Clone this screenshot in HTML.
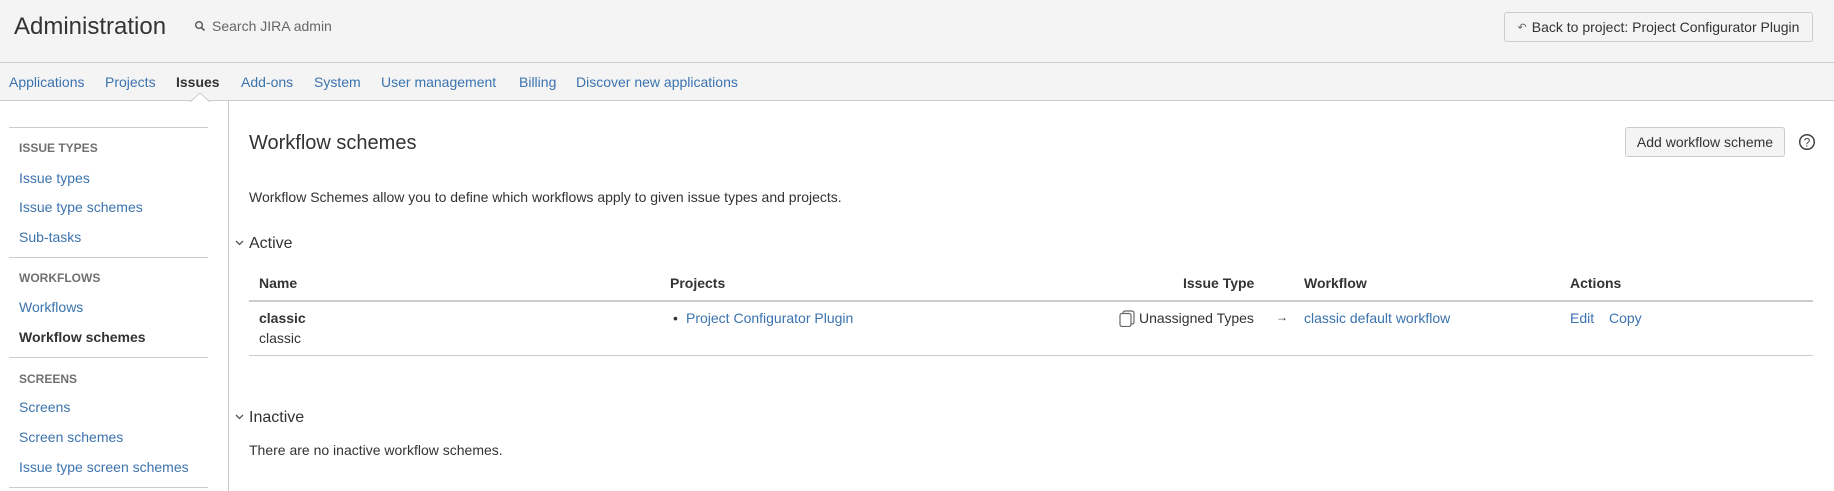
<!DOCTYPE html>
<html><head><meta charset="utf-8"><style>
*{margin:0;padding:0;box-sizing:border-box}
body{width:1834px;height:491px;overflow:hidden;background:#fff;font-family:"Liberation Sans",Arial,sans-serif;font-size:14px;color:#333;position:relative}
.a{position:absolute;white-space:nowrap;line-height:1}
.l{color:#3b73af}
.hdr{position:absolute;left:0;top:0;width:1834px;height:101px;background:#f4f4f4;border-bottom:1px solid #ccc}
.hl{position:absolute;left:0;top:62px;width:1834px;height:1px;background:#ccc}
.btn{position:absolute;border:1px solid #ccc;border-radius:3px;background:#f4f4f4;font-size:14px;color:#333;display:flex;align-items:center;justify-content:center}
.sh{font-size:12px;font-weight:bold;color:#707070}
.div{position:absolute;left:9px;width:199px;height:1px;background:#ccc}
.th{font-weight:bold}
</style></head><body>
<div class="hdr"></div><div class="hl"></div>
<div class="a" style="left:14px;top:15px;font-size:24px;color:#333">Administration</div>
<svg class="a" style="left:194px;top:20px" width="12" height="12" viewBox="0 0 12 12"><circle cx="5" cy="5" r="3.3" fill="none" stroke="#555" stroke-width="1.4"/><path d="M7.4 7.4L10.5 10.5" stroke="#555" stroke-width="1.6"/></svg>
<div class="a" style="left:212px;top:19px;color:#666">Search JIRA admin</div>
<div class="btn" style="left:1504px;top:12px;width:309px;height:30px"><span style="color:#666;font-size:11px;margin-right:5px">&#8630;</span>Back to project: Project Configurator Plugin</div>
<div class="a l" style="left:9px;top:75px">Applications</div>
<div class="a l" style="left:105px;top:75px">Projects</div>
<div class="a" style="left:176px;top:75px;font-weight:bold">Issues</div>
<div class="a l" style="left:241px;top:75px">Add-ons</div>
<div class="a l" style="left:314px;top:75px">System</div>
<div class="a l" style="left:381px;top:75px">User management</div>
<div class="a l" style="left:519px;top:75px">Billing</div>
<div class="a l" style="left:576px;top:75px">Discover new applications</div>
<svg class="a" style="left:190px;top:92px" width="20" height="10"><path d="M0 10L10 1L20 10" fill="#fff" stroke="#ccc"/></svg>
<div style="position:absolute;left:228px;top:101px;width:1px;height:390px;background:#ccc"></div>
<div class="div" style="top:127px"></div>
<div class="a sh" style="left:19px;top:142px">ISSUE TYPES</div>
<div class="a l" style="left:19px;top:171px">Issue types</div>
<div class="a l" style="left:19px;top:200px">Issue type schemes</div>
<div class="a l" style="left:19px;top:230px">Sub-tasks</div>
<div class="div" style="top:257px"></div>
<div class="a sh" style="left:19px;top:272px">WORKFLOWS</div>
<div class="a l" style="left:19px;top:300px">Workflows</div>
<div class="a" style="left:19px;top:330px;font-weight:bold">Workflow schemes</div>
<div class="div" style="top:357px"></div>
<div class="a sh" style="left:19px;top:373px">SCREENS</div>
<div class="a l" style="left:19px;top:400px">Screens</div>
<div class="a l" style="left:19px;top:430px">Screen schemes</div>
<div class="a l" style="left:19px;top:460px">Issue type screen schemes</div>
<div class="div" style="top:487px"></div>
<div class="a" style="left:249px;top:133px;font-size:20px">Workflow schemes</div>
<div class="btn" style="left:1625px;top:127px;width:160px;height:30px">Add workflow scheme</div>
<svg class="a" style="left:1798px;top:133px" width="18" height="18"><circle cx="9" cy="9" r="7.3" fill="none" stroke="#444" stroke-width="1.5"/><text x="9" y="13.5" font-size="12" text-anchor="middle" fill="#444" font-family="Liberation Sans">?</text></svg>
<div class="a" style="left:249px;top:190px">Workflow Schemes allow you to define which workflows apply to given issue types and projects.</div>
<svg class="a" style="left:235px;top:240px" width="9" height="6"><path d="M1 1L4.5 4.5L8 1" fill="none" stroke="#555" stroke-width="1.3"/></svg>
<div class="a" style="left:249px;top:236px;font-size:16px">Active</div>
<div class="a th" style="left:259px;top:276px">Name</div>
<div class="a th" style="left:670px;top:276px">Projects</div>
<div class="a th" style="left:1183px;top:276px">Issue Type</div>
<div class="a th" style="left:1304px;top:276px">Workflow</div>
<div class="a th" style="left:1570px;top:276px">Actions</div>
<div style="position:absolute;left:249px;top:300px;width:1564px;height:2px;background:#ccc"></div>
<div class="a" style="left:259px;top:311px;font-weight:bold">classic</div>
<div class="a" style="left:259px;top:331px">classic</div>
<div class="a" style="left:673px;top:311px">&#8226;</div>
<div class="a l" style="left:686px;top:311px">Project Configurator Plugin</div>
<svg class="a" style="left:1119px;top:310px" width="17" height="17"><rect x="4" y="1" width="11" height="13" rx="2" fill="#fff" stroke="#666" stroke-width="1.2"/><rect x="1" y="3.5" width="11" height="13" rx="2" fill="#fff" stroke="#666" stroke-width="1.2"/></svg>
<div class="a" style="left:1139px;top:311px">Unassigned Types</div>
<div class="a" style="left:1276px;top:311px;font-size:12px">&#8594;</div>
<div class="a l" style="left:1304px;top:311px">classic default workflow</div>
<div class="a l" style="left:1570px;top:311px">Edit</div>
<div class="a l" style="left:1609px;top:311px">Copy</div>
<div style="position:absolute;left:249px;top:355px;width:1564px;height:1px;background:#ccc"></div>
<svg class="a" style="left:235px;top:414px" width="9" height="6"><path d="M1 1L4.5 4.5L8 1" fill="none" stroke="#555" stroke-width="1.3"/></svg>
<div class="a" style="left:249px;top:410px;font-size:16px">Inactive</div>
<div class="a" style="left:249px;top:443px">There are no inactive workflow schemes.</div>
</body></html>
